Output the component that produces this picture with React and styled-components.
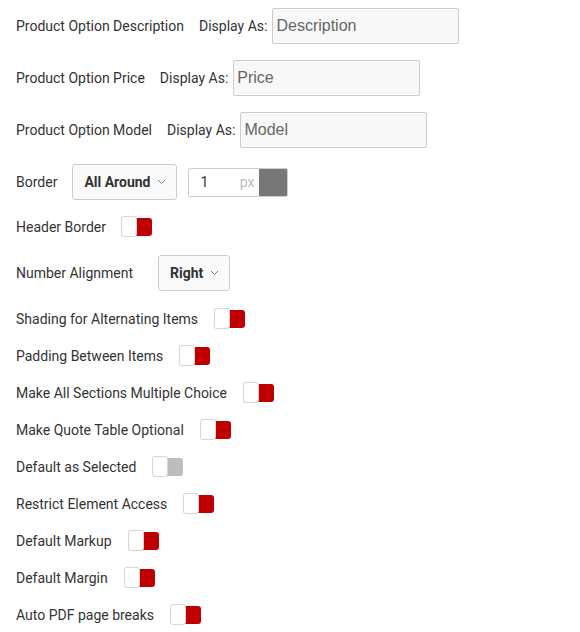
import React from "react";
import styled, { createGlobalStyle } from "styled-components";

const Global = createGlobalStyle`
  html, body { margin: 0; padding: 0; background: #fff; }
  body { font-family: Roboto, "Liberation Sans", sans-serif; }
`;

const Form = styled.div`
  display: flex;
  flex-direction: column;
  gap: 16px;
  padding: 8px 0 0 16px;
`;

const Row = styled.div`
  display: flex;
  align-items: center;
  height: ${(p) => (p.$toggle ? "21px" : "36px")};
  margin-top: ${(p) => p.$mt || 0}px;
`;

const Label = styled.span`
  font-size: 14px;
  color: #333;
  white-space: nowrap;
  margin-right: ${(p) => (p.$gap != null ? p.$gap : 15)}px;
`;

const TextInput = styled.input`
  box-sizing: border-box;
  width: 187px;
  height: 36px;
  border: 1px solid #ccc;
  border-radius: 2px;
  background: #f8f8f8;
  padding: 0 3px;
  font-family: "Liberation Sans", Arial, sans-serif;
  font-size: 16px;
  color: #666;
  outline: none;
  &::placeholder { color: #666; }
`;

const SelectBtn = styled.div`
  box-sizing: border-box;
  height: 36px;
  display: flex;
  align-items: center;
  gap: 7px;
  padding: 0 10px 0 11px;
  border: 1px solid #ccc;
  border-radius: 3px;
  background: #fafafa;
  font-size: 14px;
  font-weight: 700;
  color: #333;
`;

const NumberBox = styled.div`
  box-sizing: border-box;
  height: 29px;
  margin-left: 11px;
  display: flex;
  align-items: stretch;
  border: 1px solid #ccc;
  border-radius: 2px;
  overflow: hidden;
`;

const NumberField = styled.div`
  width: 70px;
  display: flex;
  align-items: center;
  justify-content: space-between;
  padding: 0 5px 0 11px;
  box-sizing: border-box;
  font-size: 14px;
  background: #fff;
`;

const NumVal = styled.span`
  color: #333;
`;

const Unit = styled.span`
  color: #bbb;
`;

const Swatch = styled.div`
  width: 28px;
  background: #777;
`;

const Toggle = styled.div`
  display: flex;
  align-items: center;
  width: 32px;
  height: 21px;
`;

const Knob = styled.div`
  box-sizing: border-box;
  width: 16px;
  height: 21px;
  background: #fff;
  border: 1px solid #d6d6d6;
  border-radius: 3px;
  box-shadow: 0 0 1px rgba(0, 0, 0, 0.1);
  position: relative;
  z-index: 1;
`;

const Track = styled.div`
  width: 16px;
  height: 18px;
  margin-left: -1px;
  background: ${(p) => (p.$on ? "#c00000" : "#bdbdbd")};
  border-radius: 0 3px 3px 0;
`;

const Chevron = () => (
  <svg width="9" height="6" viewBox="0 0 9 6">
    <polyline points="1,1 4.5,4.5 8,1" fill="none" stroke="#777" strokeWidth="1" />
  </svg>
);

const Switch = ({ on = true }) => (
  <Toggle>
    <Knob />
    <Track $on={on} />
  </Toggle>
);

const displayRows = [
  { label: "Product Option Description", value: "Description" },
  { label: "Product Option Price", value: "Price" },
  { label: "Product Option Model", value: "Model" },
];

const toggles = [
  { label: "Shading for Alternating Items", mt: 1 },
  { label: "Padding Between Items" },
  { label: "Make All Sections Multiple Choice" },
  { label: "Make Quote Table Optional" },
  { label: "Default as Selected", on: false },
  { label: "Restrict Element Access" },
  { label: "Default Markup" },
  { label: "Default Margin" },
  { label: "Auto PDF page breaks" },
];

export default function App() {
  return (
    <>
      <Global />
      <Form>
        {displayRows.map((r) => (
          <Row key={r.label}>
            <Label $gap={15}>{r.label}</Label>
            <Label $gap={5}>Display As:</Label>
            <TextInput placeholder={r.value} readOnly />
          </Row>
        ))}
        <Row>
          <Label $gap={15}>Border</Label>
          <SelectBtn>
            All Around <Chevron />
          </SelectBtn>
          <NumberBox>
            <NumberField>
              <NumVal>1</NumVal>
              <Unit>px</Unit>
            </NumberField>
            <Swatch />
          </NumberBox>
        </Row>
        <Row $toggle>
          <Label>Header Border</Label>
          <Switch />
        </Row>
        <Row $mt={2}>
          <Label $gap={25}>Number Alignment</Label>
          <SelectBtn>
            Right <Chevron />
          </SelectBtn>
        </Row>
        {toggles.map((t) => (
          <Row $toggle key={t.label} $mt={t.mt}>
            <Label $gap={16}>{t.label}</Label>
            <Switch on={t.on !== false} />
          </Row>
        ))}
      </Form>
    </>
  );
}
